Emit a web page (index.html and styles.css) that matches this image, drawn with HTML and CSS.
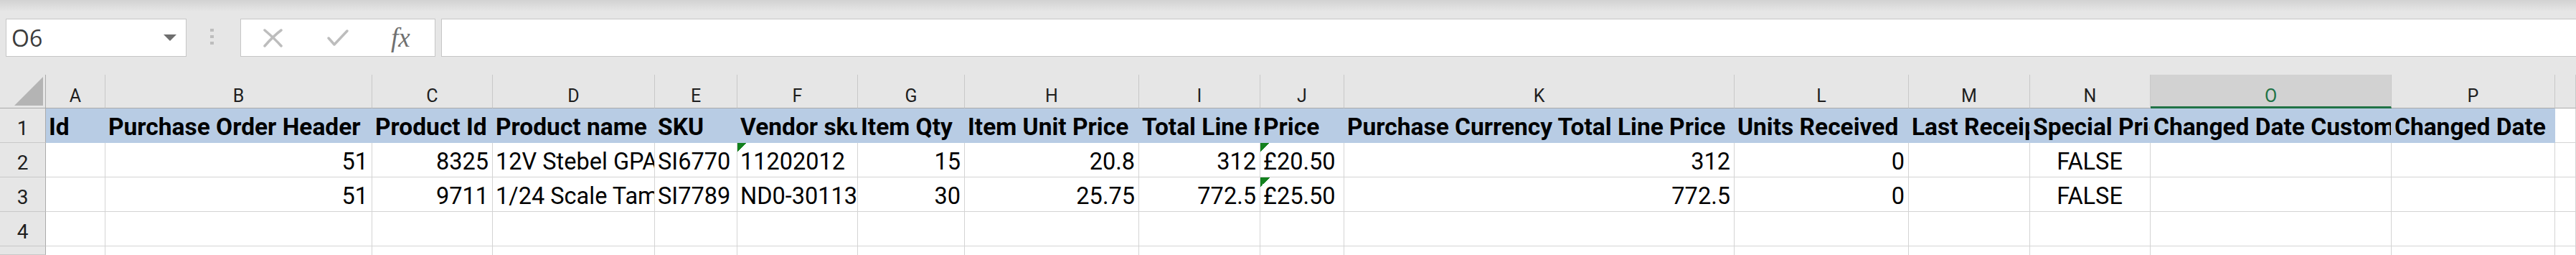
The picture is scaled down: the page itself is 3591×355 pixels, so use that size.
FILE: index.html
```html
<!DOCTYPE html>
<html lang="en">
<head>
  <meta charset="UTF-8" />
  <meta name="viewport" content="width=device-width, initial-scale=1.0"/>
  <title>Purchase Order Lines</title>

  <!-- CSS Styling -->
  <link rel="stylesheet" href="styles.css">
</head>
<body>

  <!-- Name box + formula bar -->
  <div class="toolbar">
    <div class="name-box">
      <span>O6</span>
      <span class="caret"></span>
    </div>
    <div class="grip"><i></i><i></i><i></i></div>
    <div class="fx-buttons">
      <svg class="btn-cancel" width="29" height="27" viewBox="0 0 29 27">
        <path d="M3 3 C10 9 19 17 26 25" />
        <path d="M26 3 C18 9 10 17 3 25" />
      </svg>
      <svg class="btn-enter" width="32" height="25" viewBox="0 0 32 25">
        <path d="M3 13 L11 22 L29 3" />
      </svg>
      <span class="fx">fx</span>
    </div>
    <div class="formula-input"></div>
  </div>

  <!-- Worksheet -->
  <div class="sheet">
    <!-- column headings -->
    <div class="corner"><span></span></div>
    <div class="col-head">A</div>
    <div class="col-head">B</div>
    <div class="col-head">C</div>
    <div class="col-head">D</div>
    <div class="col-head">E</div>
    <div class="col-head">F</div>
    <div class="col-head">G</div>
    <div class="col-head">H</div>
    <div class="col-head">I</div>
    <div class="col-head">J</div>
    <div class="col-head">K</div>
    <div class="col-head">L</div>
    <div class="col-head">M</div>
    <div class="col-head">N</div>
    <div class="col-head selected">O</div>
    <div class="col-head">P</div>
    <div class="col-head"></div>

    <!-- row 1 -->
    <div class="row-head">1</div>
    <div class="cell title">Id</div>
    <div class="cell title">Purchase Order Header</div>
    <div class="cell title">Product Id</div>
    <div class="cell title">Product name</div>
    <div class="cell title">SKU</div>
    <div class="cell title">Vendor sku</div>
    <div class="cell title">Item Qty</div>
    <div class="cell title">Item Unit Price</div>
    <div class="cell title">Total Line Price</div>
    <div class="cell title">Price</div>
    <div class="cell title">Purchase Currency Total Line Price</div>
    <div class="cell title">Units Received</div>
    <div class="cell title">Last Receipt Date</div>
    <div class="cell title">Special Price</div>
    <div class="cell title">Changed Date Customer</div>
    <div class="cell title">Changed Date</div>
    <div class="cell"></div>

    <!-- row 2 -->
    <div class="row-head">2</div>
    <div class="cell"></div>
    <div class="cell num">51</div>
    <div class="cell num">8325</div>
    <div class="cell">12V Stebel GPA Horn</div>
    <div class="cell">SI6770</div>
    <div class="cell flag">11202012</div>
    <div class="cell num">15</div>
    <div class="cell num">20.8</div>
    <div class="cell num">312</div>
    <div class="cell flag">£20.50</div>
    <div class="cell num">312</div>
    <div class="cell num">0</div>
    <div class="cell"></div>
    <div class="cell bool">FALSE</div>
    <div class="cell"></div>
    <div class="cell"></div>
    <div class="cell"></div>

    <!-- row 3 -->
    <div class="row-head">3</div>
    <div class="cell"></div>
    <div class="cell num">51</div>
    <div class="cell num">9711</div>
    <div class="cell">1/24 Scale Tamiya Kit</div>
    <div class="cell">SI7789</div>
    <div class="cell">ND0-301133</div>
    <div class="cell num">30</div>
    <div class="cell num">25.75</div>
    <div class="cell num">772.5</div>
    <div class="cell flag">£25.50</div>
    <div class="cell num">772.5</div>
    <div class="cell num">0</div>
    <div class="cell"></div>
    <div class="cell bool">FALSE</div>
    <div class="cell"></div>
    <div class="cell"></div>
    <div class="cell"></div>

    <!-- row 4 -->
    <div class="row-head">4</div>
    <div class="cell"></div><div class="cell"></div><div class="cell"></div><div class="cell"></div>
    <div class="cell"></div><div class="cell"></div><div class="cell"></div><div class="cell"></div>
    <div class="cell"></div><div class="cell"></div><div class="cell"></div><div class="cell"></div>
    <div class="cell"></div><div class="cell"></div><div class="cell"></div><div class="cell"></div>
    <div class="cell"></div>

    <!-- row 5 (cut off by the window) -->
    <div class="row-head"></div>
    <div class="cell"></div><div class="cell"></div><div class="cell"></div><div class="cell"></div>
    <div class="cell"></div><div class="cell"></div><div class="cell"></div><div class="cell"></div>
    <div class="cell"></div><div class="cell"></div><div class="cell"></div><div class="cell"></div>
    <div class="cell"></div><div class="cell"></div><div class="cell"></div><div class="cell"></div>
    <div class="cell"></div>
  </div>

</body>
</html>
```

FILE: styles.css
```css
body {
  margin: 0;
  width: 3591px;
  height: 355px;
  overflow: hidden;
  background: #e6e6e6;
  font-family: Roboto, "Liberation Sans", sans-serif;
}

/* ---------- formula bar ---------- */
.toolbar {
  height: 104px;
  box-sizing: border-box;
  padding-top: 26px;
  display: flex;
  align-items: flex-start;
  background: linear-gradient(#d2d2d2, #e6e6e6 16px);
}

.name-box,
.fx-buttons,
.formula-input {
  height: 53px;
  box-sizing: border-box;
  background: #fff;
  border: 1px solid #c6c6c6;
}

.name-box {
  margin-left: 8px;
  width: 252px;
  padding: 0 13px 0 7px;
  display: flex;
  align-items: center;
  justify-content: space-between;
  font-family: "Open Sans", sans-serif;
  font-size: 32px;
  color: #3c3c3c;
}

.caret {
  width: 0;
  height: 0;
  border-left: 9px solid transparent;
  border-right: 9px solid transparent;
  border-top: 9px solid #6e6e6e;
}

.grip {
  margin: 14px 37px 0 33px;
  display: flex;
  flex-direction: column;
  gap: 5px;
}

.grip i {
  width: 5px;
  height: 4px;
  background: #bdbdbd;
}

.fx-buttons {
  width: 272px;
  padding-left: 30px;
  display: flex;
  align-items: center;
}

.btn-cancel path,
.btn-enter path {
  fill: none;
  stroke: #bdbdbd;
  stroke-width: 3.5;
  stroke-linecap: round;
  stroke-linejoin: round;
}

.btn-enter {
  margin-left: 60px;
}

.fx {
  margin-left: 58px;
  font-family: "Liberation Serif", serif;
  font-style: italic;
  font-size: 37px;
  color: #707070;
  line-height: 1;
}

.formula-input {
  flex: 1;
  margin-left: 8px;
  border-right: none;
}

/* ---------- worksheet ---------- */
.sheet {
  display: grid;
  grid-template-columns: 64px 83px 372px 168px 226px 115px 168px 149px 243px 169px 117px 544px 243px 169px 168px 336px 228px 1fr;
  grid-template-rows: 47px repeat(4, 48px) 12px;
  overflow: hidden;
}

.corner {
  border-right: 1px solid #ababab;
  border-bottom: 1px solid #ababab;
  display: flex;
  align-items: flex-end;
  justify-content: flex-end;
  padding: 0 3px 3px 0;
}

.corner span {
  width: 40px;
  height: 40px;
  background: #b4b4b4;
  clip-path: polygon(100% 0, 100% 100%, 0 100%);
}

.col-head {
  border-right: 1px solid #c8c8c8;
  border-bottom: 1px solid #ababab;
  text-align: center;
  font-size: 25px;
  line-height: 59px;
  height: 47px;
  box-sizing: border-box;
  overflow: hidden;
  color: #1e1e1e;
}

.col-head.selected {
  background: #d2d2d2;
  color: #217346;
  border-bottom: 3px solid #217346;
}

.row-head {
  border-right: 1px solid #ababab;
  border-bottom: 1px solid #c8c8c8;
  text-align: center;
  font-size: 28px;
  line-height: 55px;
  overflow: hidden;
  color: #1e1e1e;
}

.cell {
  height: 48px;
  box-sizing: border-box;
  padding: 0 5px 0 4px;
  border-right: 1px solid #d4d4d4;
  border-bottom: 1px solid #d4d4d4;
  background: #fff;
  font-size: 32.5px;
  line-height: 52px;
  white-space: nowrap;
  overflow: hidden;
  color: #000;
}

.cell.title {
  background: #b8cce4;
  border-color: #b8cce4;
  font-weight: bold;
  font-size: 33.5px;
  line-height: 51px;
}

.cell.num {
  text-align: right;
}

.cell.bool {
  text-align: center;
}

/* green "number stored as text" marker */
.cell.flag {
  background: linear-gradient(135deg, #13811e 50%, transparent 50%) no-repeat 0 0 / 13px 13px, #fff;
}
```
